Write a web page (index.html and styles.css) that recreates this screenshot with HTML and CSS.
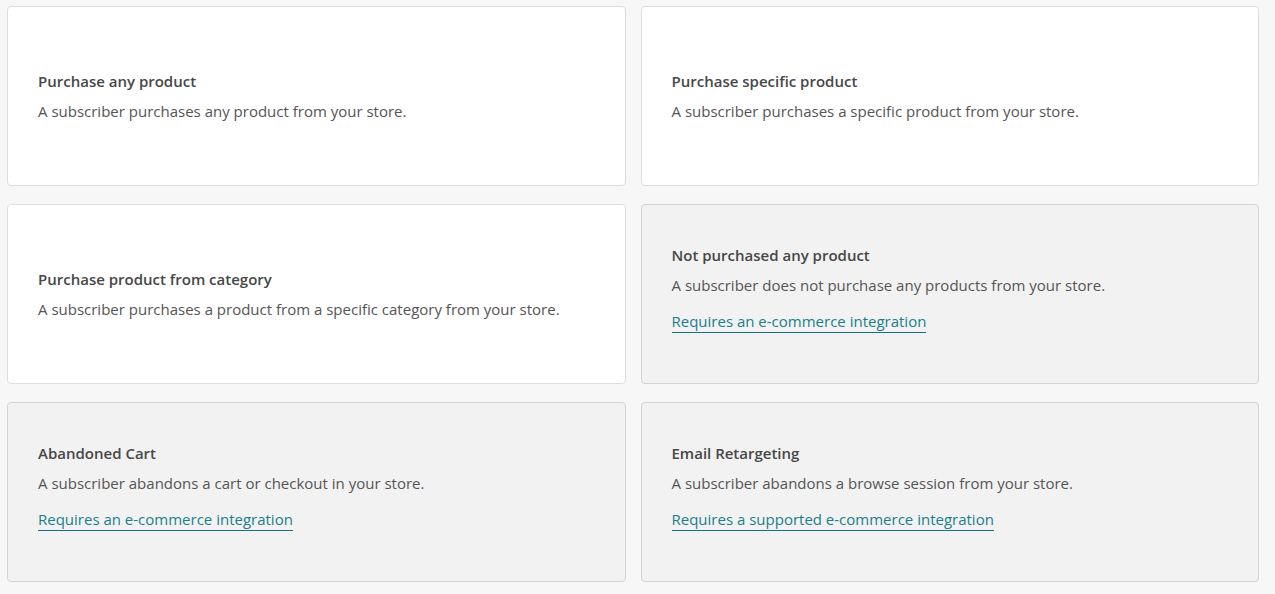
FILE: index.html
```html
<!DOCTYPE html>
<html>
<head>
<meta charset="utf-8">
<link rel="stylesheet" href="styles.css">
</head>
<body>
<div class="grid">
  <div class="card">
    <div class="content">
      <div class="title">Purchase any product</div>
      <div class="desc">A subscriber purchases any product from your store.</div>
    </div>
  </div>
  <div class="card">
    <div class="content">
      <div class="title">Purchase specific product</div>
      <div class="desc">A subscriber purchases a specific product from your store.</div>
    </div>
  </div>
  <div class="card">
    <div class="content">
      <div class="title">Purchase product from category</div>
      <div class="desc">A subscriber purchases a product from a specific category from your store.</div>
    </div>
  </div>
  <div class="card disabled">
    <div class="content">
      <div class="title">Not purchased any product</div>
      <div class="desc">A subscriber does not purchase any products from your store.</div>
      <div class="req"><a href="#">Requires an e-commerce integration</a></div>
    </div>
  </div>
  <div class="card disabled">
    <div class="content">
      <div class="title">Abandoned Cart</div>
      <div class="desc">A subscriber abandons a cart or checkout in your store.</div>
      <div class="req"><a href="#">Requires an e-commerce integration</a></div>
    </div>
  </div>
  <div class="card disabled">
    <div class="content">
      <div class="title">Email Retargeting</div>
      <div class="desc">A subscriber abandons a browse session from your store.</div>
      <div class="req"><a href="#">Requires a supported e-commerce integration</a></div>
    </div>
  </div>
</div>
</body>
</html>
```

FILE: styles.css
```css
html, body {
  margin: 0;
  padding: 0;
  background: #f7f7f7;
}
body {
  font-family: "Open Sans", "Liberation Sans", sans-serif;
  font-size: 15px;
  color: #555;
  padding: 6px 16px 0 7px;
}
.grid {
  display: grid;
  grid-template-columns: 1fr 1fr;
  grid-auto-rows: 180px;
  column-gap: 15px;
  row-gap: 18px;
  width: 1252px;
}
.card {
  box-sizing: border-box;
  background: #fff;
  border: 1px solid #dedede;
  border-radius: 4px;
  padding: 0 30px;
  display: flex;
  align-items: center;
}
.card.disabled {
  background: #f2f2f2;
  border-color: #d4d4d4;
}
.title {
  font-weight: 600;
  color: #474747;
  line-height: 20px;
}
.desc {
  margin-top: 10px;
  line-height: 20px;
  color: #555;
}
.req {
  margin-top: 16px;
  margin-bottom: 12px;
  line-height: 20px;
}
.req a {
  color: #1a7f8c;
  text-decoration: none;
  border-bottom: 1px solid #16707c;
  padding-bottom: 1px;
}
```
